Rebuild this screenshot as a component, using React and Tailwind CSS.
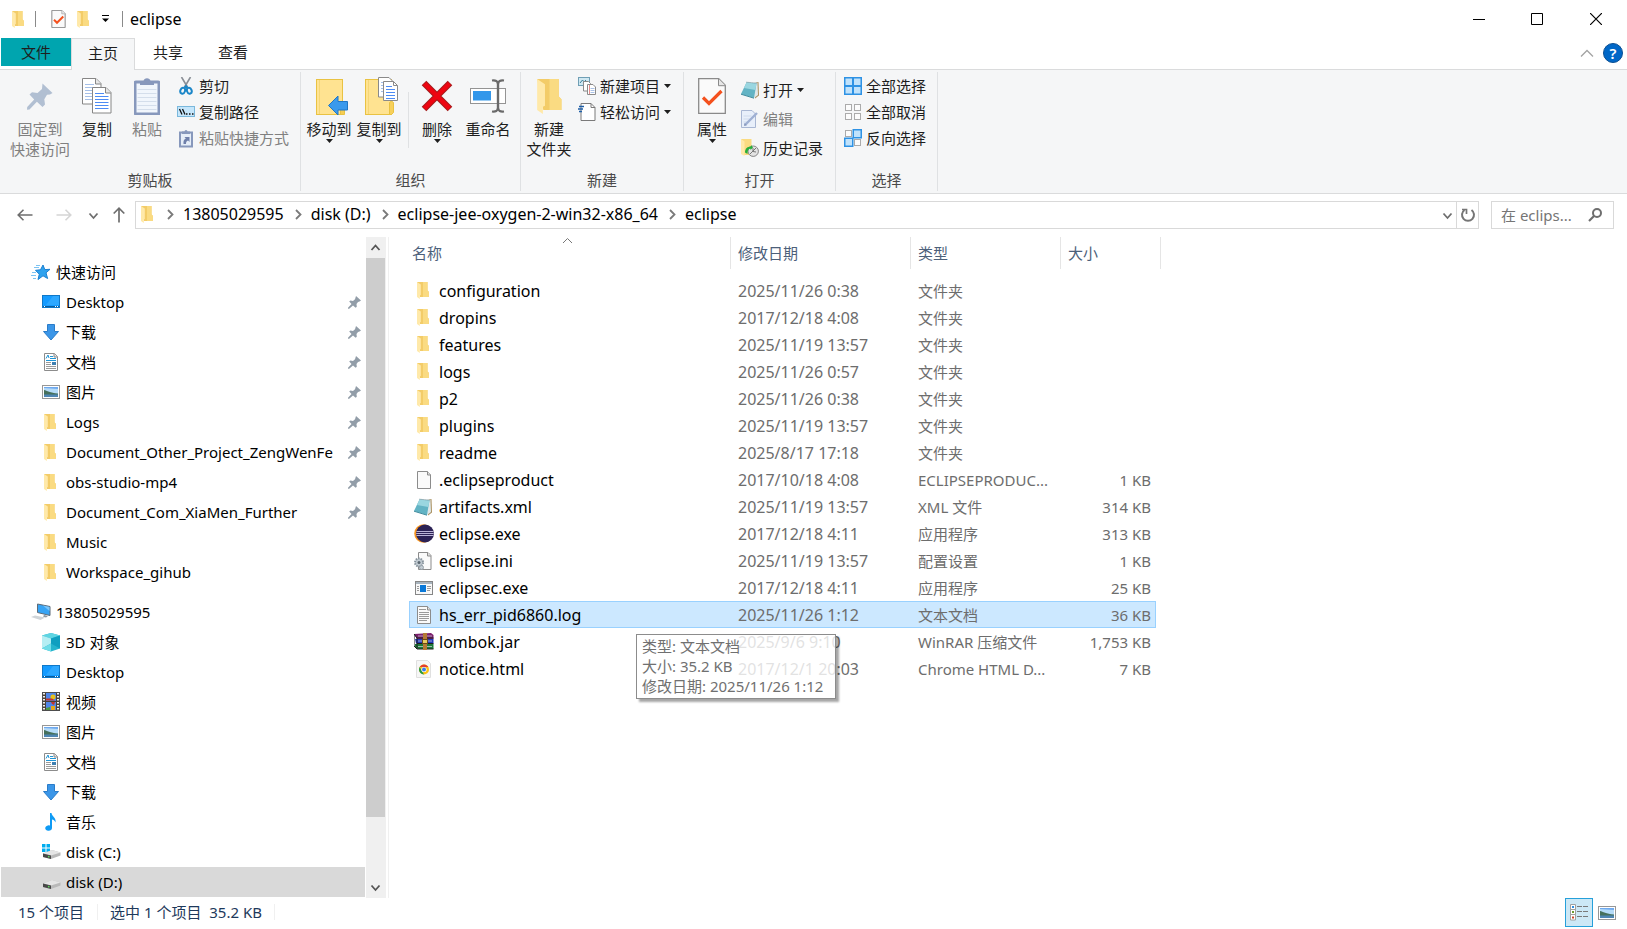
import { useState } from 'react'

/* ---------- icons ---------- */

const Svg = ({ w, h, children }) => (
  <svg width={w} height={h} viewBox={`0 0 ${w} ${h}`} fill="none" className="shrink-0" aria-hidden="true">{children}</svg>
)

function Folder({ big }) {
  return (
    <svg width={big ? 25 : 12} height={big ? 35 : 17} viewBox="0 0 12 17" fill="none" className="shrink-0" aria-hidden="true">
      <path d="M0 0h10.500v8.500l1.300 1.300V15H3z" fill="#f3cc68" />
      <path d="M6 0h4.500v8.500l1.300 1.300V15H6z" fill="#fadb82" />
      <path d="M0 0l3.800 2.600V13l-1 .5V17L0 15z" fill="#ffe9a9" />
    </svg>
  )
}

const CheckDoc = ({ big }) => (
  <svg width={big ? 28 : 15} height={big ? 36 : 18} viewBox="0 0 28 36" fill="none" className="shrink-0" aria-hidden="true">
    <path d="M.7.7h20l6.600 6.600v28H.7z" fill="#fafafa" stroke="#8a8a8a" strokeWidth={big ? 1.3 : 2} />
    <path d="M20.500.7v7h7" fill="#e6e6e6" stroke="#8a8a8a" />
    <path d="M5 19.500l6 6L23.500 13" stroke="#f4511e" strokeWidth={big ? 3.2 : 4} />
  </svg>
)

const BigPin = () => (
  <Svg w={28} h={28}>
    <path d="M16.500 1.500l10 9.500-2.500 1.500-3 .2-2.700 4.500.7 5.300-2.500 2.500-5.600-5.300L3.500 27.500 1 27.700 1.200 25l7-7.600L3.500 12.500 6 10.200l5.500.8 4.500-4z" fill="#b1bfd2" />
  </Svg>
)

const SmallPin = () => (
  <Svg w={13} h={13}>
    <path d="M8 0l5 4.500-1.500 1L10 6 8.500 8l.3 2.700-1.200 1L5 9.400 1.200 12.800H0v-1L3.500 8 1.200 5.600l1.200-1L5 5l2-1.800z" fill="#929da8" />
  </Svg>
)

const Page = ({ x, y, line = '#4c8bf5' }) => (
  <g transform={`translate(${x} ${y})`}>
    <path d="M.5.5h13.500l5 5v20.500H.5z" fill="#fff" stroke="#868686" />
    <path d="M13.500.5v5.500h5.500" fill="#e8e8e8" stroke="#868686" />
    <path d="M3 6.500h9M3 9.500h13.500M3 12.500h13.500M3 15.500h13.500M3 18.500h13.500M3 21.500h13.500" stroke={line} />
  </g>
)

const CopyIcon = () => <Svg w={31} h={37}><Page x={0} y={0} line="#a5bfe8" /><Page x={10} y={9} /></Svg>

const PasteIcon = () => (
  <Svg w={26} h={37}>
    <rect x="1" y="4" width="24" height="32" rx="1" fill="#f1f6fc" stroke="#8798bc" strokeWidth="3" />
    <path d="M6 4.500a7 7 0 0 1 3.500-1.500 3.600 3.600 0 0 1 7 0A7 7 0 0 1 20 4.500V7H6z" fill="#8798bc" />
    <path d="M3.500 11.500h19M3.500 15.500h19M3.500 19.500h19M3.500 23.500h19M3.500 27.500h19M3.500 31.500h19" stroke="#d4deeb" />
  </Svg>
)

const Scissors = () => (
  <Svg w={18} h={18}>
    <path d="M4.500 0L11 11M13.500 0L7 11" stroke="#8a8f96" strokeWidth="1.600" />
    <ellipse cx="5.700" cy="13.700" rx="2.300" ry="3" stroke="#1a86c8" strokeWidth="2" transform="rotate(20 5.700 13.700)" />
    <ellipse cx="12.300" cy="13.700" rx="2.300" ry="3" stroke="#1a86c8" strokeWidth="2" transform="rotate(-20 12.300 13.700)" />
    <path d="M7 10l2-2.500L11 10 9 12z" fill="#1a86c8" />
  </Svg>
)

const CopyPath = () => (
  <Svg w={18} h={18}>
    <rect x=".5" y="3.500" width="17" height="10" fill="#c5e6fb" stroke="#7ab8dc" />
    <path d="M2.500 6l2.500 5.500M5.500 6L8 11.500" stroke="#111" strokeWidth="1.300" />
    <path d="M9 11h1.500M12 11h1.500M15 11h1.500" stroke="#111" strokeWidth="1.400" />
  </Svg>
)

const PasteShortcut = () => (
  <Svg w={18} h={19}>
    <rect x="3" y="3.500" width="12" height="14" fill="#e6eef8" stroke="#8798bc" strokeWidth="2" />
    <path d="M5 5V2.500h2.500a1.500 1.500 0 0 1 3 0H13V5z" fill="#8798bc" />
    <path d="M6.500 15c-.4-3.300.7-4.800 2.300-5.600L7.500 8h5v5l-1.400-1.400c-1.600.6-2.100 1.800-2.100 3.400z" fill="#6f80ab" />
  </Svg>
)

const YellowBook = () => (
  <>
    <rect x=".5" y="2.500" width="26" height="35" fill="#ffe391" stroke="#e9c242" />
    <path d="M3.500 3v34" stroke="#f5d676" />
  </>
)

const MoveTo = () => (
  <Svg w={32} h={38}>
    <YellowBook />
    <path d="M24.500 37.500v-11h4v11z" fill="#f5cd54" stroke="#e9c242" />
    <path d="M12.500 28.500L22 19v5.500h9.500v8.500H22v5z" fill="#3b9aec" stroke="#2277c4" />
  </Svg>
)

const CopyTo = () => (
  <Svg w={34} h={38}>
    <YellowBook />
    <path d="M24.500 37.500v-12l2-1.500 2 1.500v10l-2 2z" fill="#f7d05a" stroke="#e9c242" />
    <g transform="translate(13 0)">
      <path d="M.5.500h10.500l4 4v15.500H.5z" fill="#fff" stroke="#8a8a8a" />
      <path d="M3 5.500h6M3 8.500h9M3 11.500h9M3 14.500h9" stroke="#a5bfe8" />
      <path d="M5.500 4.500h10l4 4v15H5.500z" fill="#fff" stroke="#8a8a8a" />
      <path d="M15.500 4.500v4h4" stroke="#8a8a8a" />
      <path d="M8 9.500h6M8 12.500h9M8 15.500h9M8 18.500h9M8 21.500h9" stroke="#4c8bf5" />
    </g>
  </Svg>
)

const DeleteX = () => (
  <Svg w={32} h={32}>
    <path d="M3 3l26 26M29 3L3 29" stroke="#a31b1b" strokeWidth="6.500" />
    <path d="M3.500 3.500l25 25M28.500 3.500l-25 25" stroke="#ee0511" strokeWidth="4.500" />
  </Svg>
)

const RenameIcon = () => (
  <Svg w={36} h={34}>
    <rect x=".5" y="9.500" width="35" height="15" fill="#fff" stroke="#949494" />
    <rect x="3" y="12" width="18" height="9.500" fill="#3397ea" />
    <path d="M28 3v28" stroke="#6a6a6a" strokeWidth="2.400" />
    <path d="M22 1.500c3.500-.5 6 .5 6 3.500 0-3 2.500-4 6-3.500M22 32.500c3.500.5 6-.5 6-3.500 0 3 2.500 4 6 3.500" stroke="#6a6a6a" strokeWidth="2.200" />
  </Svg>
)

const NewItem = () => (
  <Svg w={18} h={18}>
    <rect x=".5" y=".5" width="11" height="8" fill="#cfe8f2" stroke="#6f9fb5" />
    <path d="M2 6l2.500-3L6 5l2-2" stroke="#3f7f98" />
    <path d="M5.500 4.500h5l2 2v7.500h-7z" fill="#fff" stroke="#8a8a8a" />
    <path d="M9.500 7.500h5.500l2.500 2.500v7.500h-8z" fill="#fff" stroke="#8a8a8a" />
    <path d="M11.500 8v9" stroke="#e58c8c" />
    <path d="M12.500 11.500h4M12.500 13.500h4M12.500 15.500h4" stroke="#a9c1e6" />
  </Svg>
)

const EasyAccess = () => (
  <Svg w={18} h={18}>
    <path d="M3 .5h10l4 4v13H3z" fill="#fff" stroke="#7a7a7a" />
    <path d="M13 .5v4h4" stroke="#7a7a7a" />
    <path d="M1 3.500h5M0 6h5M1 8.500h3" stroke="#1f5fa8" strokeWidth="1.300" />
  </Svg>
)

const Notebook = () => (
  <Svg w={19} h={18}>
    <path d="M14.500 1.500l3-.5.500 13.500-4 3z" fill="#a98f5e" />
    <path d="M6 1l10.500.8L17 14l-4 3-2-1.500z" fill="#dfe7e9" />
    <path d="M5.500 1.500L15.500 2.500 13 17 0 13z" fill="#62b3c4" />
    <path d="M5.500 1.500L15.500 2.500l-1.200 6.500L3 7z" fill="#9ad6e0" />
    <path d="M5.500 1.200l10.500 1" stroke="#6f8a92" strokeDasharray="1 1" />
    <path d="M0 13.200l13 4" stroke="#3f8a9c" />
  </Svg>
)

const EditIcon = () => (
  <Svg w={18} h={18}>
    <path d="M.5.500h10.500l3.500 3.500v13.500H.5z" fill="#e8effa" stroke="#a9b7d3" />
    <path d="M2.500 6h8M2.500 9h7M2.500 12h5" stroke="#cfdaec" />
    <path d="M4 15L16 3" stroke="#9fb0d2" strokeWidth="2.400" />
    <path d="M3 16l.5-3 2.300 2.200z" fill="#8798bc" />
  </Svg>
)

const HistoryIcon = () => (
  <Svg w={18} h={18}>
    <path d="M0 0h10.500v16H3z" fill="#fadb82" />
    <path d="M0 0l3.500 2.500V17L0 15z" fill="#ffe9a9" />
    <circle cx="12.200" cy="12.200" r="5.200" fill="#e3e3e3" stroke="#858585" />
    <path d="M9 15l6-6M12 9v3.500l3 .5" stroke="#777" />
    <path d="M4 13.500c0-4 2.500-6 6-6V6l2 2.500-2.500 2.500V9.800C7.500 10 6.500 11 6.500 15z" fill="#27ae3b" />
  </Svg>
)

const Grid4 = ({ on }) => (
  <Svg w={18} h={18}>
    {[[0, 0], [1, 0], [0, 1], [1, 1]].map(([cx, cy], i) => {
      const lit = on[i]
      return (
        <rect key={i} x={lit ? cx * 8.5 + 0.75 : cx * 9 + 1.5} y={lit ? cy * 8.5 + 0.75 : cy * 9 + 1.5}
          width={lit ? 8 : 6} height={lit ? 8 : 6}
          fill={lit ? '#c0e2fb' : '#fcfcfc'} stroke={lit ? '#2e92e4' : '#ababab'} strokeWidth={lit ? 1.5 : 1} />
      )
    })}
  </Svg>
)

const Star = () => (
  <Svg w={20} h={17}>
    <path d="M12 1l1.800 4.600 5.200-.3-4 3.500 1.600 5.700-4.600-2.700L7 15.500l1.300-5.300L4.500 6.300l5-.5z" fill="#2ea2ee" stroke="#1b7fd0" />
    <path d="M5 1.500h4M3 3.500h5M1 8.500h4M0 11.500h5M2 14.500h3" stroke="#7cc3f2" />
  </Svg>
)

const DesktopIcon = () => (
  <Svg w={18} h={18}>
    <rect x=".5" y="2.500" width="17" height="12" fill="#159bff" stroke="#0f78c8" />
    <path d="M11 3h6v9H4z" fill="#2ea8ff" />
    <path d="M1 13.500h16" stroke="#0b5c9c" />
    <path d="M2 13.500h1M13 13.500h1M15 13.500h1" stroke="#fff" />
  </Svg>
)

const DownArrow = () => (
  <Svg w={18} h={18}>
    <path d="M5.500 1.500h7v7h4L9 17 1.500 8.500h4z" fill="#3b96e8" stroke="#2a7cc9" />
  </Svg>
)

const DocIcon = () => (
  <Svg w={18} h={18}>
    <path d="M2.500.500h10l3 3v14h-13z" fill="#fff" stroke="#8c8c8c" />
    <path d="M12 .5v3.500h3.500" fill="#e0e0e0" stroke="#8c8c8c" />
    <path d="M4 5.500l2-3.500 1 3M8 3.500h3M8 5.500h6M4 7.500h10" stroke="#2095d5" />
    <path d="M4 9.500h5M4 11.500h5M4 13.500h10M4 15.500h10" stroke="#9a9a9a" />
    <rect x="10" y="9" width="4" height="3" fill="#3f7fb0" />
  </Svg>
)

const PictureIcon = () => (
  <Svg w={18} h={18}>
    <rect x=".5" y="2.500" width="17" height="13" fill="#fff" stroke="#979797" />
    <rect x="2" y="4" width="14" height="10" fill="#b5dbf8" />
    <path d="M2 4h14v2L2 5z" fill="#6ea9ef" />
    <path d="M2 7c3 .5 6 3 14 3.500V12H2z" fill="#46705c" />
    <path d="M2 11.500h14V14H2z" fill="#4f86b4" />
  </Svg>
)

const PcIcon = () => (
  <Svg w={20} h={18}>
    <path d="M6.500 1l12.500 2.500v9L6.500 9.500z" fill="#37a4f5" stroke="#5d6b78" />
    <path d="M12 2.500l6.500 1.500v4z" fill="#7cc6fa" />
    <path d="M13 12l4 1-2 1.500-3-1z" fill="#8d98a3" />
    <path d="M0 14l4-1.500 10 2L9.500 17z" fill="#cfd4d8" />
  </Svg>
)

const CubeIcon = () => (
  <Svg w={18} h={20}>
    <path d="M9 1l9 2.500v13L9 19.500 0 16.500v-13z" fill="#25b4cd" />
    <path d="M0 3.500L9 1l9 2.500L9 6.500z" fill="#5fd5e2" />
    <path d="M0 3.500l9 3v5L0 16.500z" fill="#b5eef3" />
    <path d="M18 3.500l-9 3v5l9 5z" fill="#0f9fc0" />
    <path d="M0 16.500l9-5v8z" fill="#6fdde8" />
  </Svg>
)

const VideoIcon = () => (
  <Svg w={18} h={20}>
    <rect x=".5" y=".5" width="17" height="18" fill="#4a4036" stroke="#4d4d4d" />
    <path d="M2 1v17M16 1v17" stroke="#f2f2f2" strokeWidth="2" strokeDasharray="1.500 1.500" />
    <rect x="4" y="1" width="10" height="8" fill="#4f86e8" />
    <rect x="4" y="10" width="10" height="8" fill="#4f86e8" />
    <circle cx="11" cy="5" r="2.500" fill="#e8c11a" />
    <path d="M4 6.500h6l3 2H4zM9 10h4l-1 3-2-1z" fill="#c5352c" />
    <path d="M9 14h4v4H9z" fill="#e8a51a" />
    <path d="M4 16l4-1v3H4z" fill="#4c9a45" />
  </Svg>
)

const MusicIcon = () => (
  <Svg w={18} h={18}>
    <path d="M8 0h1.500c.3 3.500 5 4.500 4 9.500-.8-2-2-2.700-3.500-3v8.300a3.400 2.700 0 1 1-2-2.200z" fill="#0f9bf5" />
  </Svg>
)

const DiskIcon = ({ win }) => (
  <Svg w={19} h={18}>
    {win && <path d="M0 1h3.500v3.500H0zM4.500 1H8v3.500H4.500zM0 5.500h3.500V9H0zM4.500 5.500H8V9H4.500z" fill="#00adef" />}
    <path d="M1 10.500l9-3.500 8.500 2.500v3L9 16l-8-2z" fill="#b9b9b9" />
    <path d="M1 10.500l9-3.500 8.500 2.500L9 12.500z" fill="#e5e5e5" />
    <path d="M1 10.500l8 2V16l-8-2z" fill="#484848" />
    <path d="M6 13.500l1.500.4" stroke="#5fe05f" strokeWidth="1.400" />
  </Svg>
)

const BlankFile = ({ lines }) => (
  <Svg w={19} h={18}>
    <path d="M3.500.500h10l3 3v14h-13z" fill="#fafafa" stroke="#8c8c8c" />
    <path d="M13.500.5v3.500h3.500" fill="#dedede" stroke="#8c8c8c" />
    {lines && <path d="M5 3.500h7M5 6.500h10M5 8.500h10M5 10.500h10M5 12.500h10M5 14.500h8" stroke="#9a9a9a" />}
  </Svg>
)

const IniFile = () => (
  <Svg w={19} h={18}>
    <path d="M4.500.500h9.500l3 3v14h-12.500z" fill="#fafafa" stroke="#8c8c8c" />
    <path d="M13.500.5v3.500h3.500" fill="#dedede" stroke="#8c8c8c" />
    <circle cx="5" cy="10.500" r="4" fill="#c3ccd3" stroke="#87939c" strokeWidth="2" strokeDasharray="1.500 1" />
    <circle cx="7.500" cy="15.500" r="2" fill="#c3ccd3" stroke="#98a3ab" />
    <circle cx="5" cy="10.500" r="1.500" fill="#5a6670" />
  </Svg>
)

const EclipseIcon = () => (
  <Svg w={20} h={19}>
    <circle cx="9.500" cy="9.500" r="9.300" fill="#f7941e" />
    <circle cx="11" cy="9.500" r="9" fill="#2c2255" />
    <path d="M2.500 7.500h17M2.200 9.500h17.500M2.500 11.500h17" stroke="#b9b2d6" strokeWidth="1.200" />
  </Svg>
)

const ExeIcon = () => (
  <Svg w={19} h={18}>
    <rect x="1.500" y="2.500" width="17" height="13" fill="#f8f8f8" stroke="#868686" />
    <path d="M2 4h16" stroke="#a8b4be" strokeWidth="2" />
    <rect x="6" y="6" width="6" height="7" fill="#0a78d7" />
    <path d="M3 7.500h2M3 9.500h2M3 11.500h2M13 7.500h4M13 9.500h4M13 11.500h3" stroke="#9a9a9a" />
  </Svg>
)

const RarIcon = () => (
  <Svg w={20} h={17}>
    <path d="M0 1l17-1 2.500 2v4H3z" fill="#7c1f6d" />
    <path d="M1 6h18.500v4.500H2z" fill="#2138b8" />
    <path d="M1 11h18.500v5H4L1 14z" fill="#1d7a3a" />
    <path d="M0 1l3 4v11l-3-3zM3 5h16.500M3 10.500h16.500M3 16h16.500" stroke="#1e1e1e" />
    <path d="M4 3h14M4 8h14M4 13.500h14" stroke="#d9d9e6" strokeWidth=".7" />
    <rect x="9" y="0" width="4" height="17" fill="#b47a34" />
    <rect x="8.500" y="6.500" width="5" height="4" fill="#e8cf63" stroke="#6b4a16" />
  </Svg>
)

const ChromeFile = () => (
  <Svg w={19} h={18}>
    <path d="M2.500.500h11l3 3v14h-14z" fill="#f6f6f6" stroke="#e0e0e0" />
    <circle cx="10" cy="9.500" r="5" fill="#fbc116" />
    <path d="M5.700 7A5 5 0 0 1 14.300 7H10z" fill="#e33b2e" />
    <path d="M5.700 7l2.500 4.500 1.800 3A5 5 0 0 1 5.700 7z" fill="#229a48" />
    <circle cx="10" cy="9.500" r="2.600" fill="#fff" />
    <circle cx="10" cy="9.500" r="2" fill="#3a7be8" />
  </Svg>
)

const Chevron = ({ dir = 'right', className = '' }) => {
  const d = {
    right: 'M4 1l4.500 4.500L4 10',
    down: 'M1.500 3.500L5.500 8l4-4.500',
    up: 'M1.500 8L5.500 3.500 9.500 8',
  }[dir]
  return (
    <svg width="11" height="11" viewBox="0 0 11 11" fill="none" className={`shrink-0 ${className}`} aria-hidden="true">
      <path d={d} stroke="currentColor" strokeWidth="1.800" />
    </svg>
  )
}

const Caret = () => <Svg w={7} h={4}><path d="M0 0h7L3.500 4z" fill="#1e1e1e" /></Svg>

/* ---------- ribbon ---------- */

function BigButton({ icon, lines, width, disabled, caret }) {
  return (
    <button disabled={disabled}
      className={`flex flex-col items-center shrink-0 pt-1 leading-5 ${width} ${disabled ? 'text-[#808080]' : 'text-[#1e1e1e]'}`}>
      <span className="h-10 mb-[3px] flex items-center justify-center">{icon}</span>
      {lines.map(l => <span key={l} className="whitespace-nowrap">{l}</span>)}
      {caret && <Caret />}
    </button>
  )
}

function SmallButton({ icon, label, disabled, caret }) {
  return (
    <button disabled={disabled}
      className={`flex items-center whitespace-nowrap leading-6 ${disabled ? 'text-[#808080]' : 'text-[#1e1e1e]'}`}>
      <span className="w-[22px] flex">{icon}</span>
      {label}
      {caret && <span className="ml-1"><Caret /></span>}
    </button>
  )
}

function Group({ label, width, children }) {
  return (
    <section aria-label={label} className={`flex flex-col shrink-0 my-0.5 pb-px border-r border-[#dfe1e3] ${width}`}>
      <div className="flex flex-1">{children}</div>
      <div className="text-center leading-5 text-[#4a4a4a]">{label}</div>
    </section>
  )
}

function Ribbon() {
  return (
    <div className="flex h-[124px] bg-[#f5f6f7] border-b border-[#dadbdc]">
      <Group label="剪贴板" width="w-[301px]">
        <BigButton icon={<BigPin />} lines={['固定到', '快速访问']} width="w-20" disabled />
        <BigButton icon={<CopyIcon />} lines={['复制']} width="w-[34px]" />
        <BigButton icon={<PasteIcon />} lines={['粘贴']} width="w-[66px]" disabled />
        <div className="flex flex-col gap-0.5 pt-0.5 -ml-[3px]">
          <SmallButton icon={<Scissors />} label="剪切" />
          <SmallButton icon={<CopyPath />} label="复制路径" />
          <SmallButton icon={<PasteShortcut />} label="粘贴快捷方式" disabled />
        </div>
      </Group>
      <Group label="组织" width="w-[220px]">
        <div className="w-[3px]" />
        <BigButton icon={<span className="pl-1.5"><MoveTo /></span>} lines={['移动到']} width="w-[50px]" caret />
        <BigButton icon={<span className="pl-1.5"><CopyTo /></span>} lines={['复制到']} width="w-[50px]" caret />
        <div className="w-px h-14 mt-5 ml-1 bg-[#dfe1e3]" />
        <BigButton icon={<DeleteX />} lines={['删除']} width="w-14" caret />
        <BigButton icon={<RenameIcon />} lines={['重命名']} width="w-[46px]" />
      </Group>
      <Group label="新建" width="w-[163px]">
        <BigButton icon={<Folder big />} lines={['新建', '文件夹']} width="w-14" />
        <div className="flex flex-col gap-0.5 pt-0.5 ml-px">
          <SmallButton icon={<NewItem />} label="新建项目" caret />
          <SmallButton icon={<EasyAccess />} label="轻松访问" caret />
        </div>
      </Group>
      <Group label="打开" width="w-[152px]">
        <BigButton icon={<CheckDoc big />} lines={['属性']} width="w-14" caret />
        <div className="flex flex-col gap-[5px] pt-1.5 ml-px">
          <SmallButton icon={<Notebook />} label="打开" caret />
          <SmallButton icon={<EditIcon />} label="编辑" disabled />
          <SmallButton icon={<HistoryIcon />} label="历史记录" />
        </div>
      </Group>
      <Group label="选择" width="w-[102px]">
        <div className="flex flex-col gap-0.5 pt-0.5 ml-2">
          <SmallButton icon={<Grid4 on={[1, 1, 1, 1]} />} label="全部选择" />
          <SmallButton icon={<Grid4 on={[0, 0, 0, 0]} />} label="全部取消" />
          <SmallButton icon={<Grid4 on={[0, 1, 1, 0]} />} label="反向选择" />
        </div>
      </Group>
    </div>
  )
}

/* ---------- data ---------- */

const QUICK = [
  { name: 'Desktop', icon: <DesktopIcon />, pin: true },
  { name: '下载', icon: <DownArrow />, pin: true },
  { name: '文档', icon: <DocIcon />, pin: true },
  { name: '图片', icon: <PictureIcon />, pin: true },
  { name: 'Logs', pin: true },
  { name: 'Document_Other_Project_ZengWenFe', pin: true },
  { name: 'obs-studio-mp4', pin: true },
  { name: 'Document_Com_XiaMen_Further', pin: true },
  { name: 'Music' },
  { name: 'Workspace_gihub' },
]

const COMPUTER = [
  { name: '3D 对象', icon: <CubeIcon /> },
  { name: 'Desktop', icon: <DesktopIcon /> },
  { name: '视频', icon: <VideoIcon /> },
  { name: '图片', icon: <PictureIcon /> },
  { name: '文档', icon: <DocIcon /> },
  { name: '下载', icon: <DownArrow /> },
  { name: '音乐', icon: <MusicIcon /> },
  { name: 'disk (C:)', icon: <DiskIcon win /> },
  { name: 'disk (D:)', icon: <DiskIcon />, active: true },
]

const FILES = [
  { name: 'configuration', date: '2025/11/26 0:38', type: '文件夹' },
  { name: 'dropins', date: '2017/12/18 4:08', type: '文件夹' },
  { name: 'features', date: '2025/11/19 13:57', type: '文件夹' },
  { name: 'logs', date: '2025/11/26 0:57', type: '文件夹' },
  { name: 'p2', date: '2025/11/26 0:38', type: '文件夹' },
  { name: 'plugins', date: '2025/11/19 13:57', type: '文件夹' },
  { name: 'readme', date: '2025/8/17 17:18', type: '文件夹' },
  { name: '.eclipseproduct', date: '2017/10/18 4:08', type: 'ECLIPSEPRODUC...', size: '1 KB', icon: <BlankFile /> },
  { name: 'artifacts.xml', date: '2025/11/19 13:57', type: 'XML 文件', size: '314 KB', icon: <Notebook /> },
  { name: 'eclipse.exe', date: '2017/12/18 4:11', type: '应用程序', size: '313 KB', icon: <EclipseIcon /> },
  { name: 'eclipse.ini', date: '2025/11/19 13:57', type: '配置设置', size: '1 KB', icon: <IniFile /> },
  { name: 'eclipsec.exe', date: '2017/12/18 4:11', type: '应用程序', size: '25 KB', icon: <ExeIcon /> },
  { name: 'hs_err_pid6860.log', date: '2025/11/26 1:12', type: '文本文档', size: '36 KB', icon: <BlankFile lines /> },
  { name: 'lombok.jar', date: '2025/9/6 9:10', type: 'WinRAR 压缩文件', size: '1,753 KB', icon: <RarIcon /> },
  { name: 'notice.html', date: '2017/12/1 20:03', type: 'Chrome HTML D...', size: '7 KB', icon: <ChromeFile /> },
]

const PATH = ['13805029595', 'disk (D:)', 'eclipse-jee-oxygen-2-win32-x86_64', 'eclipse']

/* ---------- sections ---------- */

function TitleBar() {
  return (
    <header className="flex items-center h-[38px]">
      <div className="flex items-center pl-3 flex-1">
        <Folder />
        <div className="w-px h-4 ml-[11px] mr-[15px] bg-[#8a8a8a]" />
        <button aria-label="属性"><CheckDoc /></button>
        <button aria-label="新建文件夹" className="ml-[11px]"><Folder /></button>
        <button aria-label="自定义快速访问工具栏" className="ml-3">
          <Svg w={9} h={8}><path d="M1 .5h7" stroke="#000" /><path d="M1 3.500h7L4.500 7z" fill="#000" /></Svg>
        </button>
        <div className="w-px h-4 ml-3 mr-[7px] bg-[#8a8a8a]" />
        <h1 className="text-base leading-5">eclipse</h1>
      </div>
      <button aria-label="最小化" className="w-[58px] flex justify-center"><Svg w={12} h={12}><path d="M0 6.500h12" stroke="#000" /></Svg></button>
      <button aria-label="最大化" className="w-[58px] flex justify-center"><Svg w={12} h={12}><path d="M.5.500h11v11H.5z" stroke="#000" /></Svg></button>
      <button aria-label="关闭" className="w-[60px] mr-px flex justify-center"><Svg w={12} h={12}><path d="M0 0l12 12M12 0L0 12" stroke="#000" strokeWidth="1.200" /></Svg></button>
    </header>
  )
}

function Tabs() {
  return (
    <nav className="flex h-8 border-b border-[#dadbdc] text-[#1e1e1e]">
      <button className="w-[70px] h-7 ml-px bg-[#00a5af]">文件</button>
      <button className="w-16 -mb-px pb-1 bg-[#f5f6f7] border border-b-0 border-[#dadbdc]">主页</button>
      <button className="w-[66px] pb-1">共享</button>
      <button className="w-16 pb-1">查看</button>
      <div className="flex-1" />
      <button aria-label="折叠功能区" className="mr-[9px]">
        <Svg w={14} h={9}><path d="M1 7.500l6-6 6 6" stroke="#a3a3a3" strokeWidth="1.300" /></Svg>
      </button>
      <button aria-label="帮助" className="size-5 mt-[5px] mr-1 rounded-full bg-[#0067c7] border border-[#0b4f92] text-white text-[15px] leading-[18px] font-semibold">?</button>
    </nav>
  )
}

function AddressBar() {
  const [query, setQuery] = useState('')
  return (
    <div className="flex items-center pt-[7px] pb-2 pr-[13px] text-[#6e6e6e]">
      <button aria-label="后退" className="ml-[17px]"><Svg w={16} h={12}><path d="M6.500.7L1.200 6l5.300 5.300M1.200 6H15.500" stroke="#6e6e6e" strokeWidth="1.600" /></Svg></button>
      <button aria-label="前进" className="ml-[23px]"><Svg w={16} h={12}><path d="M9.500.7L14.800 6 9.500 11.300M14.800 6H.5" stroke="#d5d5d5" strokeWidth="1.600" /></Svg></button>
      <button aria-label="最近位置" className="ml-4"><Chevron dir="down" /></button>
      <button aria-label="向上" className="ml-[14px]"><Svg w={12} h={16}><path d="M.7 6.500L6 1.200l5.300 5.300M6 1.200V15.500" stroke="#6e6e6e" strokeWidth="1.700" /></Svg></button>
      <div className="flex items-center flex-1 h-7 ml-[10px] border border-[#d9d9d9] text-black">
        <div className="flex items-center flex-1 pl-[5px] pb-0.5 text-base leading-5">
          <Folder />
          {PATH.map((p, i) => (
            <div key={p} className="flex items-center">
              <Chevron className={`text-[#7a7a7a] mr-2 ${i === 0 ? 'ml-[11px]' : 'ml-2'}`} />
              <button className="whitespace-nowrap">{p}</button>
            </div>
          ))}
        </div>
        <button aria-label="以前的位置" className="mr-[3px] text-[#6e6e6e]"><Chevron dir="down" /></button>
        <button aria-label="刷新" className="w-[22px] h-full flex items-center justify-center border-l border-[#d9d9d9]">
          <Svg w={16} h={16}>
            <path d="M11.500 3A6 6 0 1 1 4.500 3" stroke="#757575" strokeWidth="2" />
            <path d="M2 2.500h4.500V7" stroke="#757575" strokeWidth="1.700" />
          </Svg>
        </button>
      </div>
      <label className="flex items-center w-[123px] h-7 ml-3 pl-[9px] pr-[11px] border border-[#d9d9d9]">
        <input aria-label="搜索" value={query} onChange={e => setQuery(e.target.value)} placeholder="在 eclips..."
          className="flex-1 min-w-0 outline-none placeholder:text-[#757575]" />
        <Svg w={14} h={14}>
          <circle cx="9" cy="5" r="4" stroke="#6e6e6e" strokeWidth="2" />
          <path d="M6 8L1 13" stroke="#6e6e6e" strokeWidth="2.200" />
        </Svg>
      </label>
    </div>
  )
}

function TreeItem({ item }) {
  return (
    <button className={`flex items-center w-full h-[30px] pl-[41px] text-left ${item.active ? 'bg-[#d9d9d9]' : ''}`}>
      <span className="w-6 shrink-0 flex">{item.icon || <span className="pl-0.5"><Folder /></span>}</span>
      <span className="flex-1 min-w-0 whitespace-nowrap overflow-hidden">{item.name}</span>
      {item.pin && <span className="px-1"><SmallPin /></span>}
    </button>
  )
}

function TreeRoot({ icon, name }) {
  return (
    <button className="flex items-center w-full h-[30px] pl-[30px] text-left">
      <span className="w-[25px] shrink-0">{icon}</span>{name}
    </button>
  )
}

function Sidebar() {
  return (
    <aside className="flex shrink-0 w-[389px] border-r border-[#f0f0f0]">
      <div className="w-[364px] ml-px pt-5 overflow-hidden">
        <TreeRoot icon={<Star />} name="快速访问" />
        {QUICK.map(i => <TreeItem key={i.name} item={i} />)}
        <div className="h-2.5" />
        <TreeRoot icon={<PcIcon />} name="13805029595" />
        {COMPUTER.map(i => <TreeItem key={i.name} item={i} />)}
      </div>
      <div className="flex flex-col w-5 ml-px bg-[#f0f0f0] text-[#555]">
        <button aria-label="向上滚动" className="w-[19px] h-[21px] flex items-center justify-center"><Chevron dir="up" /></button>
        <div className="flex-[560] w-[19px] bg-[#cdcdcd]" />
        <div className="flex-[60]" />
        <button aria-label="向下滚动" className="w-[19px] h-[21px] flex items-center justify-center"><Chevron dir="down" /></button>
      </div>
    </aside>
  )
}

function FileList() {
  const [selected, setSelected] = useState('hs_err_pid6860.log')
  return (
    <main className="relative flex-1 min-w-0">
      <table className="table-fixed w-[752px] ml-5 border-separate border-spacing-0">
        <colgroup>
          <col className="w-[322px]" /><col className="w-[180px]" /><col className="w-[150px]" /><col className="w-[95px]" /><col className="w-[5px]" />
        </colgroup>
        <thead>
          <tr className="text-left text-[#4c607a]">
            {['名称', '修改日期', '类型', '大小'].map((h, i) => (
              <th key={h} colSpan={i === 3 ? 2 : 1}
                className={`relative h-8 p-0 font-normal border-r border-[#e5e5e5] ${i ? 'pl-[7px]' : 'pl-[3px]'}`}>
                {h}
                {i === 0 && <span className="absolute top-0 left-0 w-full pl-[153px]"><Svg w={11} h={7}><path d="M1 6l4.500-4.500L10 6" stroke="#777" /></Svg></span>}
              </th>
            ))}
          </tr>
        </thead>
        <tbody className="before:block before:h-2">
          {FILES.map(f => {
            const on = selected === f.name
            const cell = on ? 'border-[#99d1ff] bg-[#cce8ff]' : 'border-transparent'
            return (
              <tr key={f.name} onClick={() => setSelected(f.name)} className="text-[#6d6d6d]">
                <td className={`p-0 border-y border-l ${cell}`}>
                  <div className="flex items-center h-[25px] text-base leading-5 text-black">
                    <span className="w-[29px] pl-1 shrink-0">{f.icon || <span className="block pl-[3px]"><Folder /></span>}</span>{f.name}
                  </div>
                </td>
                <td className={`p-0 pl-[7px] border-y text-base leading-5 ${cell}`}>{f.date}</td>
                <td className={`p-0 pl-[7px] border-y whitespace-nowrap ${cell}`}>{f.type}</td>
                <td className={`p-0 pr-1 border-y border-r text-right ${cell}`}>{f.size}</td>
              </tr>
            )
          })}
        </tbody>
      </table>
      <div role="tooltip"
        className="absolute left-[247px] top-[397px] w-[200px] px-[5px] pt-px pb-0.5 border border-[#8c8c8c] bg-white/80 text-[#707070] leading-5 whitespace-nowrap shadow-[3px_3px_2px_rgba(0,0,0,0.35)]">
        <div>类型: 文本文档</div>
        <div>大小: 35.2 KB</div>
        <div>修改日期: 2025/11/26 1:12</div>
      </div>
    </main>
  )
}

function StatusBar() {
  return (
    <footer className="flex h-[31px] text-[#1e395b]">
      <div className="flex items-center flex-1 pb-[3px]">
        <span className="pl-[18px] pr-[13px] border-r border-[#f0f0f0] leading-4">15 个项目</span>
        <span className="px-3 border-r border-[#f0f0f0] leading-4">选中 1 个项目&nbsp; 35.2 KB</span>
      </div>
      <button aria-label="详细信息" className="w-7 h-[29px] flex items-center justify-center bg-[#cce8f6] border border-[#26a0da]">
        <Svg w={18} h={17}>
          <path d="M.5.500h5v5h-5zM.5 5.500h5v5h-5zM.5 10.500h5v5.500h-5z" fill="#fff" stroke="#a0a0a0" />
          <path d="M2 3h2" stroke="#2f8fe0" strokeWidth="2" />
          <path d="M2 8h2" stroke="#6f9a2e" strokeWidth="2" />
          <path d="M2 13.500h2" stroke="#d0452a" strokeWidth="2" />
          <path d="M7 2.500h5M13 2.500h5M7 7.500h5M13 7.500h5M7 12.500h5M13 12.500h5" stroke="#7a7a7a" />
        </Svg>
      </button>
      <button aria-label="大图标" className="w-7 h-[29px] mr-1.5 flex items-center justify-center"><PictureIcon /></button>
    </footer>
  )
}

export default function App() {
  return (
    <div className="flex flex-col h-screen overflow-hidden bg-white text-black text-[15px] leading-5 font-['Noto_Sans','Noto_Sans_CJK_SC',sans-serif]">
      <TitleBar />
      <Tabs />
      <Ribbon />
      <AddressBar />
      <div className="flex flex-1 min-h-0">
        <Sidebar />
        <FileList />
      </div>
      <StatusBar />
    </div>
  )
}
